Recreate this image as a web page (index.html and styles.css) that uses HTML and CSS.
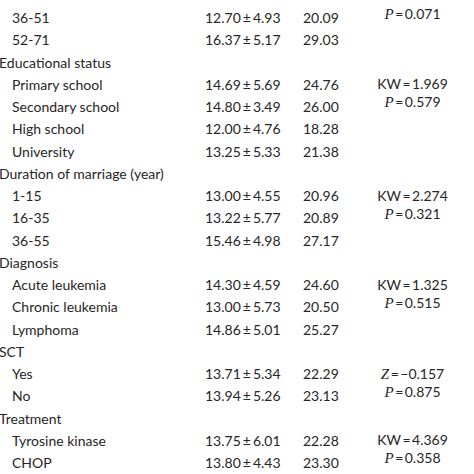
FILE: index.html
```html
<!DOCTYPE html>
<html>
<head>
<meta charset="utf-8">
<link rel="stylesheet" href="styles.css">
</head>
<body>
<div class="table">
  <div class="sub">36-51</div><div class="num">12.70<span class="pm">±</span>4.93</div><div class="num">20.09</div><div class="stat span2 first"><i>P</i><span class="eq">=</span>0.071</div>
  <div class="sub">52-71</div><div class="num">16.37<span class="pm">±</span>5.17</div><div class="num">29.03</div>

  <div class="cat">Educational status</div>
  <div class="sub">Primary school</div><div class="num">14.69<span class="pm">±</span>5.69</div><div class="num">24.76</div><div class="stat span4">KW<span class="eq">=</span>1.969<br><i>P</i><span class="eq">=</span>0.579</div>
  <div class="sub">Secondary school</div><div class="num">14.80<span class="pm">±</span>3.49</div><div class="num">26.00</div>
  <div class="sub">High school</div><div class="num">12.00<span class="pm">±</span>4.76</div><div class="num">18.28</div>
  <div class="sub">University</div><div class="num">13.25<span class="pm">±</span>5.33</div><div class="num">21.38</div>

  <div class="cat">Duration of marriage (year)</div>
  <div class="sub">1-15</div><div class="num">13.00<span class="pm">±</span>4.55</div><div class="num">20.96</div><div class="stat span3">KW<span class="eq">=</span>2.274<br><i>P</i><span class="eq">=</span>0.321</div>
  <div class="sub">16-35</div><div class="num">13.22<span class="pm">±</span>5.77</div><div class="num">20.89</div>
  <div class="sub">36-55</div><div class="num">15.46<span class="pm">±</span>4.98</div><div class="num">27.17</div>

  <div class="cat">Diagnosis</div>
  <div class="sub">Acute leukemia</div><div class="num">14.30<span class="pm">±</span>4.59</div><div class="num">24.60</div><div class="stat span3">KW<span class="eq">=</span>1.325<br><i>P</i><span class="eq">=</span>0.515</div>
  <div class="sub">Chronic leukemia</div><div class="num">13.00<span class="pm">±</span>5.73</div><div class="num">20.50</div>
  <div class="sub">Lymphoma</div><div class="num">14.86<span class="pm">±</span>5.01</div><div class="num">25.27</div>

  <div class="cat">SCT</div>
  <div class="sub">Yes</div><div class="num">13.71<span class="pm">±</span>5.34</div><div class="num">22.29</div><div class="stat span2"><i>Z</i><span class="eq">=</span>−0.157<br><i>P</i><span class="eq">=</span>0.875</div>
  <div class="sub">No</div><div class="num">13.94<span class="pm">±</span>5.26</div><div class="num">23.13</div>

  <div class="cat">Treatment</div>
  <div class="sub">Tyrosine kinase</div><div class="num">13.75<span class="pm">±</span>6.01</div><div class="num">22.28</div><div class="stat span2">KW<span class="eq">=</span>4.369<br><i>P</i><span class="eq">=</span>0.358</div>
  <div class="sub">CHOP</div><div class="num">13.80<span class="pm">±</span>4.43</div><div class="num">23.30</div>
</div>
</body>
</html>
```
FILE: styles.css
```css
html, body {
  margin: 0;
  padding: 0;
  background: #ffffff;
  overflow: hidden;
}
body {
  font-family: "Lato", "Open Sans", sans-serif;
  font-size: 14px;
  color: #262626;
}
.table {
  display: grid;
  grid-template-columns: 205px 98px 72px 75px;
  grid-auto-rows: 22.25px;
  padding-top: 7px;
  line-height: 22.25px;
  white-space: nowrap;
}
.cat {
  grid-column: 1 / -1;
  margin-left: -1px;
}
.sub {
  padding-left: 12px;
}
.pm {
  margin: 0 2px;
}
.eq {
  margin: 0 1.5px;
}
.stat {
  grid-column: 4;
  text-align: center;
  line-height: 18px;
  padding-top: 1.6px;
}
.stat i {
  font-family: "Liberation Serif", serif;
  font-size: 15px;
}
.stat.first {
  padding-top: 0;
  margin-top: -2.2px;
}
.span2 { grid-row: span 2; }
.span3 { grid-row: span 3; }
.span4 { grid-row: span 4; }
```
